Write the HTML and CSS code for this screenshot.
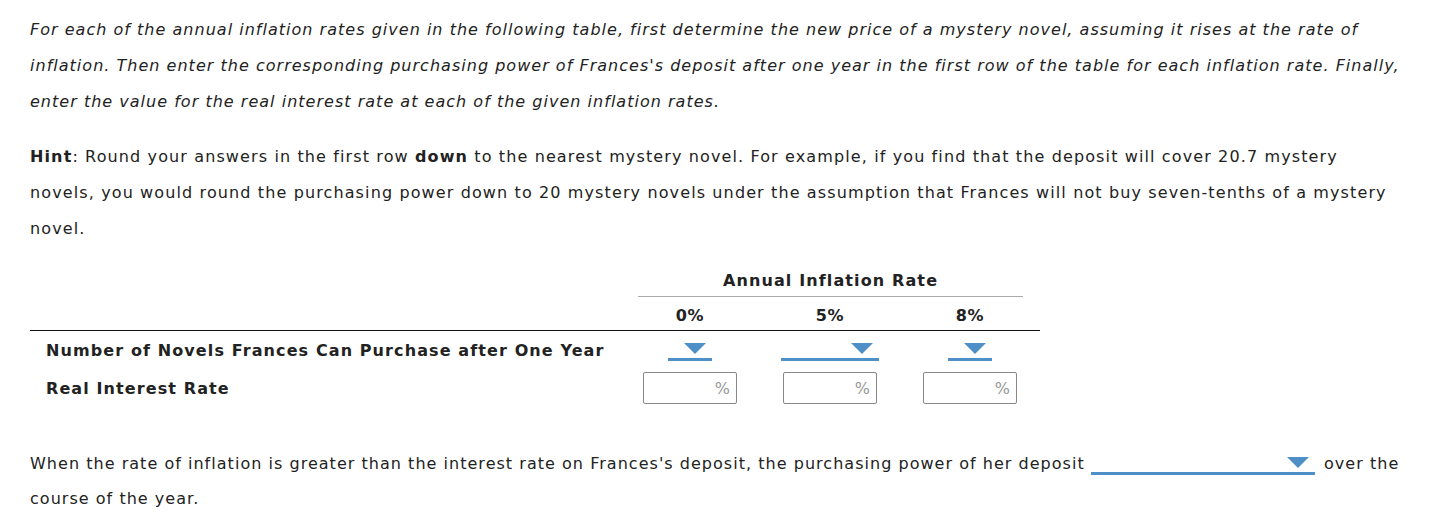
FILE: index.html
```html
<!DOCTYPE html>
<html>
<head>
<meta charset="utf-8">
<link rel="stylesheet" href="styles.css">
</head>
<body>
<div class="page">
  <p class="intro">For each of the annual inflation rates given in the following table, first determine the new price of a mystery novel, assuming it rises at the rate of inflation. Then enter the corresponding purchasing power of Frances's deposit after one year in the first row of the table for each inflation rate. Finally, enter the value for the real interest rate at each of the given inflation rates.</p>
  <p class="hint"><b>Hint</b>: Round your answers in the first row <b>down</b> to the nearest mystery novel. For example, if you find that the deposit will cover 20.7 mystery novels, you would round the purchasing power down to 20 mystery novels under the assumption that Frances will not buy seven-tenths of a mystery novel.</p>

  <div class="table">
    <div class="group-row">
      <div class="spacer"></div>
      <div class="group-head">Annual Inflation Rate</div>
    </div>
    <div class="head-row">
      <div class="label"></div>
      <div class="col-head">0%</div>
      <div class="col-head">5%</div>
      <div class="col-head">8%</div>
    </div>
    <div class="row row-sel">
      <div class="label">Number of Novels Frances Can Purchase after One Year</div>
      <div class="cell"><span class="select sel-narrow"><span class="arrow"></span></span></div>
      <div class="cell"><span class="select sel-wide"><span class="arrow"></span></span></div>
      <div class="cell"><span class="select sel-narrow"><span class="arrow"></span></span></div>
    </div>
    <div class="row row-input">
      <div class="label">Real Interest Rate</div>
      <div class="cell"><span class="pct-box"><span class="pct">%</span></span></div>
      <div class="cell"><span class="pct-box"><span class="pct">%</span></span></div>
      <div class="cell"><span class="pct-box"><span class="pct">%</span></span></div>
    </div>
  </div>

  <p class="final">When the rate of inflation is greater than the interest rate on Frances's deposit, the purchasing power of her deposit <span class="select sel-inline"><span class="arrow"></span></span> over the course of the year.</p>
</div>
</body>
</html>
```

FILE: styles.css
```css
html, body {
  margin: 0;
  padding: 0;
  background: #fff;
}
body {
  font-family: "DejaVu Sans", Verdana, sans-serif;
  font-size: 16px;
  color: #222;
  letter-spacing: 1.12px;
}
.page {
  padding: 12px 28px 0 30px;
}
p {
  margin: 0;
  line-height: 36px;
}
.intro {
  font-style: italic;
  letter-spacing: 1.02px;
}
.hint {
  margin-top: 19px;
}
b {
  font-weight: bold;
}

.table {
  width: 1010px;
  margin-top: 16px;
  display: flex;
  flex-direction: column;
}
.group-row {
  display: flex;
}
.spacer {
  width: 608px;
}
.group-head {
  width: 385px;
  text-align: center;
  font-weight: bold;
  line-height: 31px;
  padding-top: 2px;
  border-bottom: 1px solid #aaa;
}
.head-row, .row {
  display: grid;
  grid-template-columns: 590px 140px 140px 140px;
}
.head-row {
  box-sizing: border-box;
  border-bottom: 1px solid #111;
  height: 34px;
  padding-top: 3px;
  align-items: center;
}
.col-head {
  font-weight: bold;
  text-align: center;
  letter-spacing: 0.6px;
}
.row .label {
  font-weight: bold;
  padding-left: 16px;
  letter-spacing: 1.1px;
}
.row-sel {
  height: 38px;
  align-items: center;
}
.row-input {
  height: 38px;
  align-items: center;
}
.cell {
  display: flex;
  justify-content: center;
}

.select {
  position: relative;
  display: inline-block;
  height: 21px;
  border-bottom: 3px solid #4f8fc8;
  vertical-align: middle;
}
.sel-narrow {
  width: 44px;
}
.sel-wide {
  width: 98px;
}
.sel-inline {
  width: 224px;
  margin: 0 3px 0 0;
  top: -2px;
}
.arrow {
  position: absolute;
  right: 6px;
  top: 6px;
  width: 0;
  height: 0;
  border-left: 11px solid transparent;
  border-right: 11px solid transparent;
  border-top: 11px solid #4f8fc8;
}
.row-sel .cell .select {
  margin-top: -2px;
}

.pct-box {
  box-sizing: border-box;
  width: 94px;
  height: 32px;
  border: 1px solid #888;
  border-radius: 2px;
  display: flex;
  align-items: center;
  justify-content: flex-end;
  padding-right: 6px;
}
.pct {
  color: #999;
  font-size: 16px;
  letter-spacing: 0;
}

.final {
  margin-top: 39px;
  line-height: 35px;
  letter-spacing: 1.03px;
}
```
